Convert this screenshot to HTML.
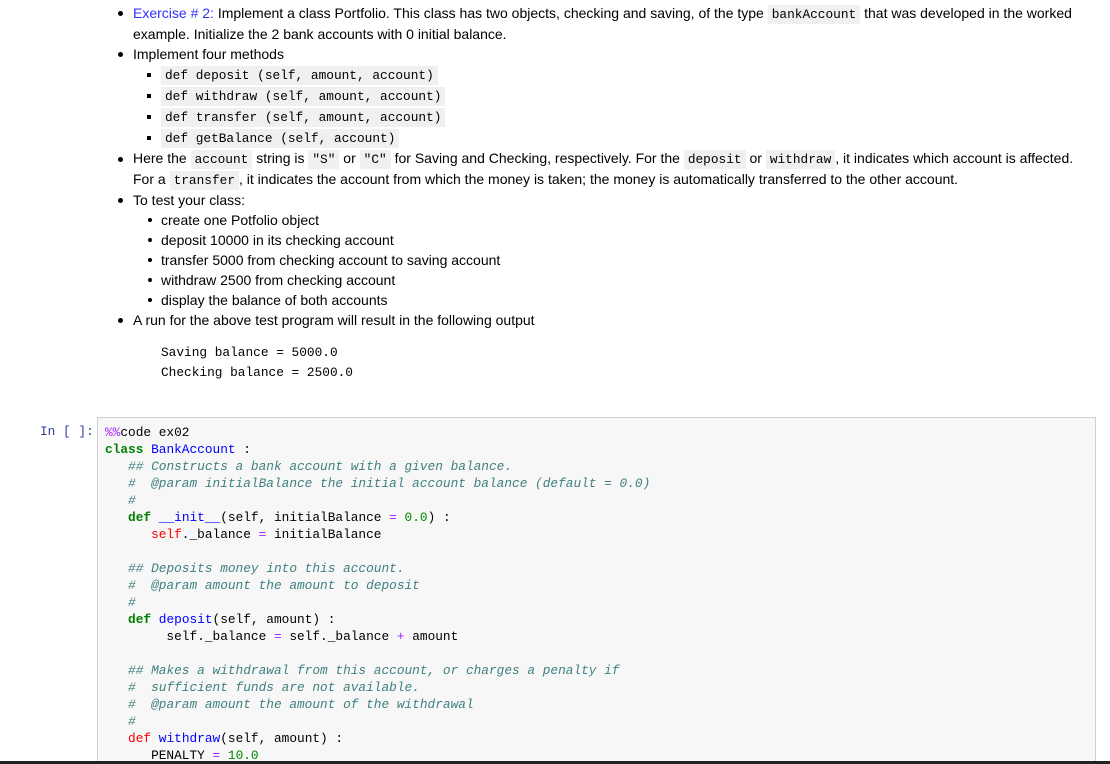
<!DOCTYPE html>
<html><head><style>
html,body{margin:0;width:1110px;height:764px;overflow:hidden}
body{background:#fff;font-family:"Liberation Sans",Arial,sans-serif;font-size:14px;color:#000;position:relative}
.t{position:absolute;white-space:nowrap;line-height:20px}
.b{position:absolute;width:5px;height:5px;border-radius:50%;background:#000}
.s{position:absolute;width:4px;height:4px;background:#000}
code{font-family:"Liberation Mono",monospace;font-size:12.8px;background:#eff0f1;padding:2px 4px}
.m{font-family:"Liberation Mono",monospace;font-size:12.8px}
.cell{position:absolute;left:97px;top:417px;width:997px;height:345px;background:#f7f7f7;border:1px solid #cfcfcf;border-bottom:none}
pre{margin:0;position:absolute;left:105px;top:424px;font-family:"Liberation Mono",monospace;font-size:12.8px;line-height:17px;color:#000}
.c{color:#408080;font-style:italic}.k{color:#008000;font-weight:bold}.n{color:#0000ff}.o{color:#aa22ff}.num{color:#080}.r{color:#f00}
</style></head><body>
<div class="b" style="left:118px;top:11px"></div>
<div class="t" style="left:133px;top:3px"><span style="color:#3030ff">Exercise # 2:</span> Implement a class Portfolio. This class has two objects, checking and saving, of the type <code>bankAccount</code> that was developed in the worked</div>
<div class="t" style="left:133px;top:24px">example. Initialize the 2 bank accounts with 0 initial balance.</div>
<div class="b" style="left:118px;top:52px"></div>
<div class="t" style="left:133px;top:44px">Implement four methods</div>
<div class="s" style="left:147px;top:73px"></div><div class="t" style="left:161px;top:64px"><code>def deposit (self, amount, account)</code></div>
<div class="s" style="left:147px;top:94px"></div><div class="t" style="left:161px;top:85px"><code>def withdraw (self, amount, account)</code></div>
<div class="s" style="left:147px;top:115px"></div><div class="t" style="left:161px;top:106px"><code>def transfer (self, amount, account)</code></div>
<div class="s" style="left:147px;top:136px"></div><div class="t" style="left:161px;top:127px"><code>def getBalance (self, account)</code></div>
<div class="b" style="left:118px;top:157px"></div>
<div class="t" style="left:133px;top:148px">Here the <code>account</code> string is <code>"S"</code> or <code>"C"</code> for Saving and Checking, respectively. For the <code>deposit</code> or <code>withdraw</code>, it indicates which account is affected.</div>
<div class="t" style="left:133px;top:169px">For a <code>transfer</code>, it indicates the account from which the money is taken; the money is automatically transferred to the other account.</div>
<div class="b" style="left:118px;top:198px"></div>
<div class="t" style="left:133px;top:190px">To test your class:</div>
<div class="b" style="left:148px;top:218px;width:4px;height:4px"></div><div class="t" style="left:161px;top:210px">create one Potfolio object</div>
<div class="b" style="left:148px;top:238px;width:4px;height:4px"></div><div class="t" style="left:161px;top:230px">deposit 10000 in its checking account</div>
<div class="b" style="left:148px;top:258px;width:4px;height:4px"></div><div class="t" style="left:161px;top:250px">transfer 5000 from checking account to saving account</div>
<div class="b" style="left:148px;top:278px;width:4px;height:4px"></div><div class="t" style="left:161px;top:270px">withdraw 2500 from checking account</div>
<div class="b" style="left:148px;top:298px;width:4px;height:4px"></div><div class="t" style="left:161px;top:290px">display the balance of both accounts</div>
<div class="b" style="left:118px;top:318px"></div>
<div class="t" style="left:133px;top:310px">A run for the above test program will result in the following output</div>
<div class="t m" style="left:161px;top:343px">Saving balance =  5000.0</div>
<div class="t m" style="left:161px;top:363px">Checking balance = 2500.0</div>
<div class="t m" style="left:40px;top:422px;color:#303f9f">In [ ]:</div>
<div class="cell"></div>
<pre><span class="o">%%</span>code ex02
<span class="k">class</span> <span class="n">BankAccount</span> :
   <span class="c">## Constructs a bank account with a given balance.</span>
   <span class="c">#  @param initialBalance the initial account balance (default = 0.0)</span>
   <span class="c">#</span>
   <span class="k">def</span> <span class="n">__init__</span>(self, initialBalance <span class="o">=</span> <span class="num">0.0</span>) :
      <span class="r">self</span>._balance <span class="o">=</span> initialBalance

   <span class="c">## Deposits money into this account.</span>
   <span class="c">#  @param amount the amount to deposit</span>
   <span class="c">#</span>
   <span class="k">def</span> <span class="n">deposit</span>(self, amount) :
        self._balance <span class="o">=</span> self._balance <span class="o">+</span> amount

   <span class="c">## Makes a withdrawal from this account, or charges a penalty if</span>
   <span class="c">#  sufficient funds are not available.</span>
   <span class="c">#  @param amount the amount of the withdrawal</span>
   <span class="c">#</span>
   <span class="r">def</span> <span class="n">withdraw</span>(self, amount) :
      PENALTY <span class="o">=</span> <span class="num">10.0</span></pre>
<div style="position:absolute;left:0;top:761px;width:1110px;height:3px;background:#222"></div>
</body></html>
